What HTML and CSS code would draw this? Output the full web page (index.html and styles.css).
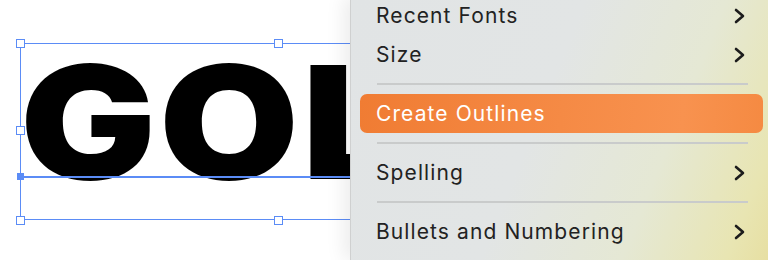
FILE: index.html
```html
<!DOCTYPE html>
<html>
<head>
<meta charset="utf-8">
<link rel="stylesheet" href="styles.css">
</head>
<body>
<div class="screen">
  <div class="canvas">
    <div class="selection">
      <div class="word">GOLD</div>
      <span class="handle h-tl"></span>
      <span class="handle h-tm"></span>
      <span class="handle h-ml"></span>
      <span class="handle h-bl"></span>
      <span class="handle h-bm"></span>
      <span class="baseline"></span>
      <span class="anchor"></span>
    </div>
  </div>
  <div class="menu">
    <div class="item"><span class="label">Recent Fonts</span><svg class="chev" viewBox="0 0 12 16"><polyline points="2,2 9,8 2,14"/></svg></div>
    <div class="item"><span class="label">Size</span><svg class="chev" viewBox="0 0 12 16"><polyline points="2,2 9,8 2,14"/></svg></div>
    <div class="sep"></div>
    <div class="item active"><span class="label">Create Outlines</span></div>
    <div class="sep"></div>
    <div class="item"><span class="label">Spelling</span><svg class="chev" viewBox="0 0 12 16"><polyline points="2,2 9,8 2,14"/></svg></div>
    <div class="sep"></div>
    <div class="item"><span class="label">Bullets and Numbering</span><svg class="chev" viewBox="0 0 12 16"><polyline points="2,2 9,8 2,14"/></svg></div>
  </div>
</div>
</body>
</html>
```

FILE: styles.css
```css
html, body {
  margin: 0;
  padding: 0;
  width: 768px;
  height: 260px;
  overflow: hidden;
  background: #ffffff;
}

.screen {
  display: flex;
  width: 768px;
  height: 260px;
}

.canvas {
  position: relative;
  width: 350px;
  flex: none;
  overflow: hidden;
  background: #ffffff;
}

.selection {
  position: relative;
  margin-left: 20px;
  margin-top: 43px;
  width: 420px;
  height: 177px;
  border-top: 1.5px solid #5b8cf6;
  border-bottom: 1.5px solid #5b8cf6;
  border-left: 1.5px solid #5b8cf6;
  box-sizing: border-box;
}

.word {
  font-family: "Inter", "Liberation Sans", sans-serif;
  font-weight: 900;
  font-size: 157px;
  line-height: 157px;
  letter-spacing: 2.5px;
  color: #000;
  margin-left: -1px;
  white-space: nowrap;
  transform: scaleX(1.15);
  transform-origin: left center;
}

.baseline {
  position: absolute;
  left: 0;
  top: 132px;
  width: 100%;
  height: 1.5px;
  background: #5b8cf6;
}

.anchor {
  position: absolute;
  left: -4.5px;
  top: 129px;
  width: 7px;
  height: 7px;
  background: #5b8cf6;
}

.handle {
  position: absolute;
  width: 9px;
  height: 9px;
  box-sizing: border-box;
  background: #fff;
  border: 1.5px solid #5b8cf6;
}
.h-tl { left: -5.5px; top: -5.5px; }
.h-tm { left: 253px; top: -5.5px; }
.h-ml { left: -5.5px; top: 82px; }
.h-bl { left: -5.5px; bottom: -5.5px; }
.h-bm { left: 253px; bottom: -5.5px; }

.menu {
  flex: 1;
  position: relative;
  border-left: 1px solid #cfd0d0;
  box-shadow: -6px 0 18px rgba(0, 0, 0, 0.08);
  background: linear-gradient(112deg, #e1e4e5 0%, #e2e5e5 45%, #e5e8d4 72%, #e8e5b2 92%, #e7dfa2 100%);
  padding: 0 5px 0 9px;
  margin-top: -4px;
  font-family: "Inter", "Liberation Sans", sans-serif;
  font-size: 21px;
  letter-spacing: 1.1px;
  color: #222222;
}

.item {
  height: 39px;
  display: flex;
  align-items: center;
  justify-content: space-between;
  padding: 0 17px 0 16px;
  border-radius: 7px;
}

.item.active {
  background: linear-gradient(95deg, #f07c33 0%, #f58a45 50%, #f8924f 80%, #f58a42 100%);
  color: #ffffff;
}

.chev {
  width: 12px;
  height: 16px;
  flex: none;
  fill: none;
  stroke: #1c1c1c;
  stroke-width: 2.6;
  stroke-linecap: round;
  stroke-linejoin: round;
}

.sep {
  height: 20px;
  display: flex;
  align-items: center;
  padding: 0 15px 0 17px;
}
.sep::before {
  content: "";
  flex: 1;
  height: 1.5px;
  background: #c9cbcb;
}
```
